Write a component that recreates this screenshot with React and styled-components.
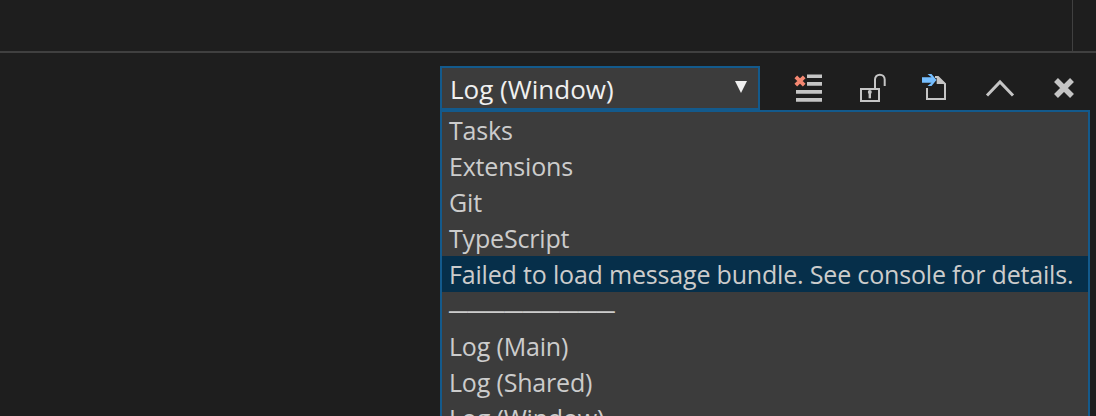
import React from 'react';
import styled, { createGlobalStyle } from 'styled-components';

const GlobalStyle = createGlobalStyle`
  html, body {
    margin: 0;
    height: 100%;
    overflow: hidden;
    background: #1e1e1e;
  }
`;

const Page = styled.div`
  width: 1096px;
  height: 416px;
  overflow: hidden;
  background: #1e1e1e;
  font-family: "Open Sans", "Noto Sans", sans-serif;
`;

const TopBar = styled.div`
  height: 51px;
  border-bottom: 2px solid #404040;
  display: flex;
  justify-content: flex-end;
  padding-right: 23px;
`;

const TopDivider = styled.div`
  width: 1px;
  background: #404040;
`;

const Panel = styled.div`
  display: flex;
  flex-direction: column;
  align-items: flex-end;
  padding-top: 13px;
`;

const HeaderRow = styled.div`
  width: 656px;
  height: 44px;
  display: flex;
  align-items: flex-start;
`;

const SelectBox = styled.div`
  box-sizing: border-box;
  flex: none;
  width: 320px;
  height: 44px;
  background: #3c3c3c;
  border: 2px solid #135a8c;
  color: #f0f0f0;
  font-size: 26px;
  line-height: 42px;
  padding-left: 8px;
  display: flex;
  justify-content: space-between;
`;

const Arrow = styled.span`
  width: 0;
  height: 0;
  margin: 13px 11px 0 0;
  border-left: 6px solid transparent;
  border-right: 6px solid transparent;
  border-top: 12px solid #f0f0f0;
`;

const Actions = styled.div`
  flex: none;
  display: flex;
  height: 44px;
  padding-left: 16px;
`;

const ActionIcon = styled.svg`
  flex: none;
  width: 64px;
  height: 44px;
`;

const List = styled.div`
  box-sizing: border-box;
  width: 650px;
  height: 306px;
  margin-right: 6px;
  background: #3c3c3c;
  border: 2px solid #135a8c;
  border-bottom: none;
`;

const Option = styled.div`
  height: 36px;
  line-height: 37px;
  padding-left: 7px;
  font-size: ${(p) => (p.$rule ? '26px' : '25px')};
  letter-spacing: ${(p) => (p.$rule ? '0' : '-0.18px')};
  white-space: nowrap;
  color: #cccccc;
  background: ${(p) => (p.$active ? '#062f4a' : 'transparent')};
`;

const RULE = '─────────';

const options = [
  'Tasks',
  'Extensions',
  'Git',
  'TypeScript',
  'Failed to load message bundle. See console for details.',
  RULE,
  'Log (Main)',
  'Log (Shared)',
  'Log (Window)',
];

export default function App() {
  return (
    <Page>
      <GlobalStyle />
      <TopBar>
        <TopDivider />
      </TopBar>
      <Panel>
        <HeaderRow>
          <SelectBox>
            Log (Window)
            <Arrow />
          </SelectBox>
          <Actions>
            <ActionIcon viewBox="0 0 64 44">
              <path d="M19.8 10.8l8.4 8.4M28.2 10.8l-8.4 8.4" stroke="#f48771" strokeWidth="3.8" fill="none" />
              <path d="M31 8.5h15V12H31zM31 16h15v3.7H31zM20 24h26v3.7H20zM20 32h26v3.7H20z" fill="#c5c5c5" />
            </ActionIcon>
            <ActionIcon viewBox="0 0 64 44">
              <rect x="21" y="23" width="18" height="12" fill="none" stroke="#c5c5c5" strokeWidth="2" />
              <circle cx="29.8" cy="26" r="2" fill="#c5c5c5" />
              <path d="M28.6 26h2.4v6.3h-2.4z" fill="#c5c5c5" />
              <path d="M35 22v-8.5a4.7 4.7 0 0 1 9.7 0V20" fill="none" stroke="#c5c5c5" strokeWidth="2" />
            </ActionIcon>
            <ActionIcon viewBox="0 0 64 44">
              <path d="M23 22v11h18V18l-7-7h-3" fill="none" stroke="#c5c5c5" strokeWidth="2" />
              <path d="M32.7 10l9.3 8h-9.3z" fill="#c5c5c5" />
              <path d="M18 11.3h9.5L23.5 8h4l5 6-5 6h-4l4-3.3H18z" fill="#75beff" />
            </ActionIcon>
            <ActionIcon viewBox="0 0 64 44">
              <path d="M19 29.5L32 16l13 13.5" fill="none" stroke="#c5c5c5" strokeWidth="3" />
            </ActionIcon>
            <ActionIcon viewBox="0 0 64 44">
              <path d="M24 14l16 16M40 14L24 30" fill="none" stroke="#c5c5c5" strokeWidth="5.5" />
            </ActionIcon>
          </Actions>
        </HeaderRow>
        <List>
          {options.map((o) => (
            <Option key={o} $active={o.startsWith('Failed')} $rule={o === RULE}>{o}</Option>
          ))}
        </List>
      </Panel>
    </Page>
  );
}
